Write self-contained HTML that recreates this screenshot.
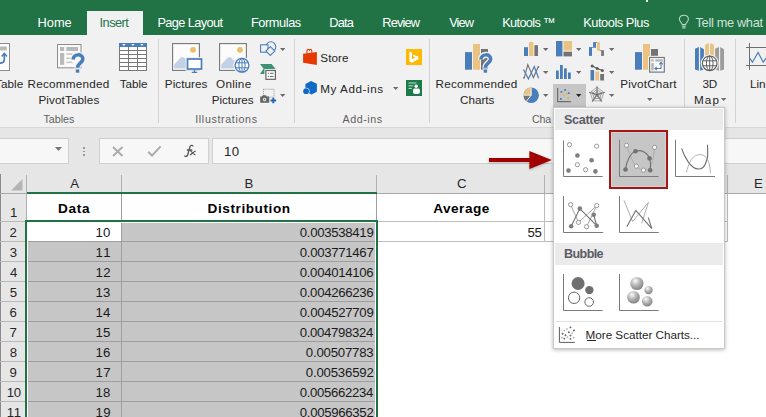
<!DOCTYPE html>
<html><head><meta charset="utf-8"><title>x</title>
<style>
html,body{margin:0;padding:0;background:#fff;}
#root{position:relative;width:766px;height:417px;overflow:hidden;background:#fff;font-family:"Liberation Sans",sans-serif;}
.t{position:absolute;white-space:pre;margin:0;padding:0;}
.r{position:absolute;}
svg{position:absolute;overflow:visible;}
</style></head><body><div id="root">
<div class="r" style="left:0px;top:0px;width:766px;height:35px;background:#217346;"></div>
<div class="r" style="left:87px;top:11px;width:56px;height:24px;background:#f1f1f1;"></div>
<div class="r" style="left:0px;top:35px;width:766px;height:92px;background:#f1f1f1;"></div>
<div class="r" style="left:0px;top:127px;width:766px;height:1px;background:#d6d6d6;"></div>
<div class="r" style="left:0px;top:128px;width:766px;height:46px;background:#e6e6e6;"></div>
<div class="t" style="left:37.38px;top:14px;font-size:12.8px;line-height:17px;letter-spacing:0.075px;color:#ffffff;">Home</div>
<div class="t" style="left:157.38px;top:14px;font-size:12.8px;line-height:17px;letter-spacing:-0.625px;color:#ffffff;">Page Layout</div>
<div class="t" style="left:250.98px;top:14px;font-size:12.8px;line-height:17px;letter-spacing:-0.443px;color:#ffffff;">Formulas</div>
<div class="t" style="left:329.18px;top:14px;font-size:12.8px;line-height:17px;letter-spacing:-0.783px;color:#ffffff;">Data</div>
<div class="t" style="left:382.28px;top:14px;font-size:12.8px;line-height:17px;letter-spacing:-0.832px;color:#ffffff;">Review</div>
<div class="t" style="left:449.20px;top:14px;font-size:12.8px;line-height:17px;letter-spacing:-0.940px;color:#ffffff;">View</div>
<div class="t" style="left:502.28px;top:14px;font-size:12.8px;line-height:17px;letter-spacing:-0.680px;color:#ffffff;">Kutools ™</div>
<div class="t" style="left:583.18px;top:14px;font-size:12.8px;line-height:17px;letter-spacing:-0.445px;color:#ffffff;">Kutools Plus</div>
<div class="t" style="left:99.55px;top:14px;font-size:12.8px;line-height:17px;letter-spacing:-0.530px;color:#217346;">Insert</div>
<div class="t" style="left:695.54px;top:14px;font-size:12.8px;line-height:17px;letter-spacing:-0.332px;color:#cfe2d6;">Tell me what</div>
<div class="t" style="left:-4.83px;top:76px;font-size:11.7px;line-height:15px;letter-spacing:0.010px;color:#262626;">Table</div>
<div class="t" style="left:27.46px;top:76px;font-size:11.7px;line-height:15px;letter-spacing:0.251px;color:#262626;">Recommended</div>
<div class="t" style="left:38.46px;top:92px;font-size:11.7px;line-height:15px;letter-spacing:0.100px;color:#262626;">PivotTables</div>
<div class="t" style="left:119.77px;top:76px;font-size:11.7px;line-height:15px;letter-spacing:-0.065px;color:#262626;">Table</div>
<div class="t" style="left:164.86px;top:76px;font-size:11.7px;line-height:15px;letter-spacing:0.030px;color:#262626;">Pictures</div>
<div class="t" style="left:216.07px;top:76px;font-size:11.7px;line-height:15px;letter-spacing:0.256px;color:#262626;">Online</div>
<div class="t" style="left:211.66px;top:92px;font-size:11.7px;line-height:15px;letter-spacing:-0.027px;color:#262626;">Pictures</div>
<div class="t" style="left:43.59px;top:112px;font-size:10.7px;line-height:14px;letter-spacing:-0.047px;color:#5f5f5f;">Tables</div>
<div class="t" style="left:195.24px;top:112px;font-size:10.7px;line-height:14px;letter-spacing:0.641px;color:#5f5f5f;">Illustrations</div>
<div class="t" style="left:342.60px;top:112px;font-size:10.7px;line-height:14px;letter-spacing:0.534px;color:#5f5f5f;">Add-ins</div>
<div class="t" style="left:532.07px;top:112px;font-size:10.7px;line-height:14px;letter-spacing:-0.177px;color:#5f5f5f;">Cha</div>
<div class="t" style="left:320.37px;top:50px;font-size:11.7px;line-height:15px;letter-spacing:0.033px;color:#262626;">Store</div>
<div class="t" style="left:320.26px;top:81px;font-size:11.7px;line-height:15px;letter-spacing:0.554px;color:#262626;">My Add-ins</div>
<div class="t" style="left:435.56px;top:76px;font-size:11.7px;line-height:15px;letter-spacing:0.251px;color:#262626;">Recommended</div>
<div class="t" style="left:460.02px;top:92px;font-size:11.7px;line-height:15px;letter-spacing:-0.012px;color:#262626;">Charts</div>
<div class="t" style="left:620.36px;top:76px;font-size:11.7px;line-height:15px;letter-spacing:0.173px;color:#262626;">PivotChart</div>
<div class="t" style="left:702.49px;top:76px;font-size:11.7px;line-height:15px;letter-spacing:-0.281px;color:#262626;">3D</div>
<div class="t" style="left:693.96px;top:92px;font-size:11.7px;line-height:15px;letter-spacing:1.174px;color:#262626;">Map</div>
<div class="t" style="left:749.96px;top:76px;font-size:11.7px;line-height:15px;letter-spacing:0.000px;color:#262626;">Line</div>
<div class="r" style="left:158px;top:39px;width:1px;height:84px;background:#d2d2d2;"></div>
<div class="r" style="left:294px;top:39px;width:1px;height:84px;background:#d2d2d2;"></div>
<div class="r" style="left:429px;top:39px;width:1px;height:84px;background:#d2d2d2;"></div>
<div class="r" style="left:684px;top:39px;width:1px;height:84px;background:#d2d2d2;"></div>
<div class="r" style="left:735px;top:39px;width:1px;height:84px;background:#d2d2d2;"></div>
<div class="r" style="left:-1px;top:138px;width:70px;height:26px;background:#f7f7f7;box-sizing:border-box;border:1px solid #cfcfcf;"></div>
<div class="r" style="left:99px;top:138px;width:110px;height:26px;background:#f7f7f7;box-sizing:border-box;border:1px solid #cfcfcf;"></div>
<div class="r" style="left:212px;top:138px;width:560px;height:26px;background:#f7f7f7;box-sizing:border-box;border:1px solid #cfcfcf;"></div>
<svg style="left:55px;top:147px" width="8" height="5"><path d="M0 0H7L3.5 4Z" fill="#777"/></svg>
<div class="r" style="left:83.3px;top:147px;width:1.4px;height:1.6px;background:#9a9a9a;"></div>
<div class="r" style="left:83.3px;top:150.5px;width:1.4px;height:1.6px;background:#9a9a9a;"></div>
<div class="r" style="left:83.3px;top:154px;width:1.4px;height:1.6px;background:#9a9a9a;"></div>
<svg style="left:112px;top:145px" width="12" height="12"><path d="M1 2L10.5 11M10.5 2L1 11" stroke="#ababab" stroke-width="1.9" fill="none"/></svg>
<svg style="left:147px;top:145px" width="14" height="12"><path d="M1.2 6.8L5 10.6L13.6 1.4" stroke="#ababab" stroke-width="2.1" fill="none"/></svg>
<svg style="left:0;top:0" width="766" height="417"><path d="M193 146.4C192.6 145 190.5 144.9 189.9 147L187.7 154.7C187.1 156.7 185.3 157 184.4 155.7M186.8 150H192.3" stroke="#555" stroke-width="1.3" fill="none"/><path d="M189.8 154.9C191.5 154.9 194 151 195.8 151M190.3 151C191.6 151 193.6 154.9 195.4 154.9" stroke="#555" stroke-width="1.15" fill="none"/></svg>
<div class="t" style="left:224.01px;top:143px;font-size:13.2px;line-height:17px;letter-spacing:0.300px;color:#262626;">10</div>
<div class="r" style="left:0px;top:174px;width:766px;height:20px;background:#e6e6e6;"></div>
<div class="r" style="left:0px;top:194px;width:26px;height:230px;background:#e6e6e6;"></div>
<div class="r" style="left:26px;top:194px;width:740px;height:230px;background:#ffffff;"></div>
<div class="r" style="left:0px;top:174px;width:1px;height:250px;background:#8a8a8a;"></div>
<div class="r" style="left:26px;top:194px;width:1px;height:27px;background:#b1b1b1;"></div>
<svg style="left:11px;top:179px" width="12" height="12"><path d="M11.5 0V11.5H0Z" fill="#b4b4b4"/></svg>
<div class="r" style="left:26px;top:175px;width:1px;height:19px;background:#b1b1b1;"></div>
<div class="r" style="left:121px;top:175px;width:1px;height:19px;background:#b1b1b1;"></div>
<div class="r" style="left:376px;top:175px;width:1px;height:19px;background:#b1b1b1;"></div>
<div class="r" style="left:544px;top:175px;width:1px;height:19px;background:#b1b1b1;"></div>
<div class="r" style="left:727px;top:175px;width:1px;height:19px;background:#b1b1b1;"></div>
<div class="r" style="left:0px;top:193px;width:766px;height:1px;background:#a9a9a9;"></div>
<div class="t" style="left:70.30px;top:175px;font-size:13.2px;line-height:17px;letter-spacing:0.000px;color:#262626;">A</div>
<div class="t" style="left:244.44px;top:175px;font-size:13.2px;line-height:17px;letter-spacing:0.000px;color:#262626;">B</div>
<div class="t" style="left:456.94px;top:175px;font-size:13.2px;line-height:17px;letter-spacing:0.000px;color:#262626;">C</div>
<div class="t" style="left:753.94px;top:175px;font-size:13.2px;line-height:17px;letter-spacing:0.000px;color:#262626;">E</div>
<div class="r" style="left:0px;top:221px;width:26px;height:1px;background:#b9b9b9;"></div>
<div class="r" style="left:0px;top:241px;width:26px;height:1px;background:#b9b9b9;"></div>
<div class="r" style="left:0px;top:261px;width:26px;height:1px;background:#b9b9b9;"></div>
<div class="r" style="left:0px;top:281px;width:26px;height:1px;background:#b9b9b9;"></div>
<div class="r" style="left:0px;top:301px;width:26px;height:1px;background:#b9b9b9;"></div>
<div class="r" style="left:0px;top:321px;width:26px;height:1px;background:#b9b9b9;"></div>
<div class="r" style="left:0px;top:341px;width:26px;height:1px;background:#b9b9b9;"></div>
<div class="r" style="left:0px;top:361px;width:26px;height:1px;background:#b9b9b9;"></div>
<div class="r" style="left:0px;top:381px;width:26px;height:1px;background:#b9b9b9;"></div>
<div class="r" style="left:0px;top:401px;width:26px;height:1px;background:#b9b9b9;"></div>
<div class="r" style="left:28px;top:242px;width:348px;height:180px;background:#c6c6c6;"></div>
<div class="r" style="left:122px;top:223px;width:254px;height:20px;background:#c6c6c6;"></div>
<div class="r" style="left:27px;top:221px;width:350px;height:1px;background:#9f9f9f;"></div>
<div class="r" style="left:27px;top:241px;width:350px;height:1px;background:#9f9f9f;"></div>
<div class="r" style="left:27px;top:261px;width:350px;height:1px;background:#9f9f9f;"></div>
<div class="r" style="left:27px;top:281px;width:350px;height:1px;background:#9f9f9f;"></div>
<div class="r" style="left:27px;top:301px;width:350px;height:1px;background:#9f9f9f;"></div>
<div class="r" style="left:27px;top:321px;width:350px;height:1px;background:#9f9f9f;"></div>
<div class="r" style="left:27px;top:341px;width:350px;height:1px;background:#9f9f9f;"></div>
<div class="r" style="left:27px;top:361px;width:350px;height:1px;background:#9f9f9f;"></div>
<div class="r" style="left:27px;top:381px;width:350px;height:1px;background:#9f9f9f;"></div>
<div class="r" style="left:27px;top:401px;width:350px;height:1px;background:#9f9f9f;"></div>
<div class="r" style="left:121px;top:194px;width:1px;height:230px;background:#9f9f9f;"></div>
<div class="r" style="left:377px;top:221px;width:350px;height:1px;background:#bdbdbd;"></div>
<div class="r" style="left:377px;top:241px;width:350px;height:1px;background:#bdbdbd;"></div>
<div class="r" style="left:544px;top:194px;width:1px;height:48px;background:#bdbdbd;"></div>
<div class="r" style="left:727px;top:194px;width:1px;height:48px;background:#bdbdbd;"></div>
<div class="r" style="left:376px;top:194px;width:1px;height:28px;background:#9f9f9f;"></div>
<div class="r" style="left:27px;top:192px;width:350px;height:2px;background:#217346;"></div>
<div class="r" style="left:25px;top:220px;width:353px;height:2px;background:#217346;"></div>
<div class="r" style="left:25px;top:220px;width:2px;height:200px;background:#217346;"></div>
<div class="r" style="left:376px;top:220px;width:2px;height:200px;background:#217346;"></div>
<div class="r" style="left:28px;top:222px;width:348px;height:1px;background:#fff;"></div>
<div class="r" style="left:27px;top:222px;width:1px;height:200px;background:#fff;"></div>
<div class="r" style="left:375px;top:222px;width:1px;height:200px;background:#fff;"></div>
<div class="t" style="left:57.92px;top:200px;font-size:13.6px;line-height:17px;letter-spacing:0.701px;color:#000;font-weight:700;">Data</div>
<div class="t" style="left:207.62px;top:200px;font-size:13.6px;line-height:17px;letter-spacing:0.564px;color:#000;font-weight:700;">Distribution</div>
<div class="t" style="left:433.16px;top:200px;font-size:13.6px;line-height:17px;letter-spacing:0.512px;color:#000;font-weight:700;">Average</div>
<div class="t" style="left:527.57px;top:224px;font-size:13.2px;line-height:17px;letter-spacing:-0.296px;color:#1a1a1a;">55</div>
<div class="t" style="left:10.01px;top:204px;font-size:13.2px;line-height:17px;letter-spacing:0.000px;color:#262626;">1</div>
<div class="t" style="left:9.54px;top:224px;font-size:13.2px;line-height:17px;letter-spacing:0.000px;color:#262626;">2</div>
<div class="t" style="left:95.41px;top:224px;font-size:13.2px;line-height:17px;letter-spacing:0.300px;color:#1a1a1a;">10</div>
<div class="t" style="left:299.74px;top:224px;font-size:13.2px;line-height:17px;letter-spacing:-0.303px;color:#1a1a1a;">0.003538419</div>
<div class="t" style="left:9.74px;top:244px;font-size:13.2px;line-height:17px;letter-spacing:0.000px;color:#262626;">3</div>
<div class="t" style="left:95.41px;top:244px;font-size:13.2px;line-height:17px;letter-spacing:1.422px;color:#1a1a1a;">11</div>
<div class="t" style="left:299.74px;top:244px;font-size:13.2px;line-height:17px;letter-spacing:-0.303px;color:#1a1a1a;">0.003771467</div>
<div class="t" style="left:9.94px;top:264px;font-size:13.2px;line-height:17px;letter-spacing:0.000px;color:#262626;">4</div>
<div class="t" style="left:95.41px;top:264px;font-size:13.2px;line-height:17px;letter-spacing:0.432px;color:#1a1a1a;">12</div>
<div class="t" style="left:299.74px;top:264px;font-size:13.2px;line-height:17px;letter-spacing:-0.310px;color:#1a1a1a;">0.004014106</div>
<div class="t" style="left:9.67px;top:284px;font-size:13.2px;line-height:17px;letter-spacing:0.000px;color:#262626;">5</div>
<div class="t" style="left:95.41px;top:284px;font-size:13.2px;line-height:17px;letter-spacing:0.366px;color:#1a1a1a;">13</div>
<div class="t" style="left:299.74px;top:284px;font-size:13.2px;line-height:17px;letter-spacing:-0.310px;color:#1a1a1a;">0.004266236</div>
<div class="t" style="left:9.54px;top:304px;font-size:13.2px;line-height:17px;letter-spacing:0.000px;color:#262626;">6</div>
<div class="t" style="left:95.41px;top:304px;font-size:13.2px;line-height:17px;letter-spacing:0.168px;color:#1a1a1a;">14</div>
<div class="t" style="left:299.74px;top:304px;font-size:13.2px;line-height:17px;letter-spacing:-0.303px;color:#1a1a1a;">0.004527709</div>
<div class="t" style="left:9.54px;top:324px;font-size:13.2px;line-height:17px;letter-spacing:0.000px;color:#262626;">7</div>
<div class="t" style="left:95.41px;top:324px;font-size:13.2px;line-height:17px;letter-spacing:0.366px;color:#1a1a1a;">15</div>
<div class="t" style="left:299.74px;top:324px;font-size:13.2px;line-height:17px;letter-spacing:-0.330px;color:#1a1a1a;">0.004798324</div>
<div class="t" style="left:9.67px;top:344px;font-size:13.2px;line-height:17px;letter-spacing:0.000px;color:#262626;">8</div>
<div class="t" style="left:95.41px;top:344px;font-size:13.2px;line-height:17px;letter-spacing:0.366px;color:#1a1a1a;">16</div>
<div class="t" style="left:305.77px;top:344px;font-size:13.2px;line-height:17px;letter-spacing:-0.194px;color:#1a1a1a;">0.00507783</div>
<div class="t" style="left:9.61px;top:364px;font-size:13.2px;line-height:17px;letter-spacing:0.000px;color:#262626;">9</div>
<div class="t" style="left:95.41px;top:364px;font-size:13.2px;line-height:17px;letter-spacing:0.432px;color:#1a1a1a;">17</div>
<div class="t" style="left:305.77px;top:364px;font-size:13.2px;line-height:17px;letter-spacing:-0.186px;color:#1a1a1a;">0.00536592</div>
<div class="t" style="left:6.81px;top:384px;font-size:13.2px;line-height:17px;letter-spacing:-0.400px;color:#262626;">10</div>
<div class="t" style="left:95.41px;top:384px;font-size:13.2px;line-height:17px;letter-spacing:0.366px;color:#1a1a1a;">18</div>
<div class="t" style="left:299.74px;top:384px;font-size:13.2px;line-height:17px;letter-spacing:-0.330px;color:#1a1a1a;">0.005662234</div>
<div class="t" style="left:6.81px;top:404px;font-size:13.2px;line-height:17px;letter-spacing:0.722px;color:#262626;">11</div>
<div class="t" style="left:95.41px;top:404px;font-size:13.2px;line-height:17px;letter-spacing:0.432px;color:#1a1a1a;">19</div>
<div class="t" style="left:299.74px;top:404px;font-size:13.2px;line-height:17px;letter-spacing:-0.303px;color:#1a1a1a;">0.005966352</div>
<svg style="left:-18px;top:43px" width="28" height="28"><rect x="0.5" y="0.5" width="27" height="27" fill="#fdfdfd" stroke="#8c8c8c"/>
<rect x="3" y="3.5" width="21.8" height="3.9" fill="#b9b9b9"/>
<path d="M22.3 10.6V16.5C22.3 20.4 17.5 21 15.5 18.6" stroke="#4a7ebb" stroke-width="1.7" fill="none"/>
<path d="M19.6 13.6L22.3 10.4L25 13.6" stroke="#4a7ebb" stroke-width="1.5" fill="none"/></svg>
<svg style="left:57px;top:44px" width="30" height="31"><rect x="0.5" y="0.5" width="23.5" height="23.3" fill="#fafafa" stroke="#8c8c8c"/>
<rect x="3" y="3" width="4.2" height="4" fill="#b9b9b9"/><rect x="9.3" y="3" width="11.7" height="4" fill="#b9b9b9"/>
<rect x="3" y="9" width="4.2" height="11.8" fill="#b9b9b9"/>
<rect x="9.3" y="9.3" width="6" height="1.5" fill="#c4c4c4"/><rect x="9.3" y="13.6" width="6" height="1.5" fill="#c4c4c4"/><rect x="9.3" y="17.6" width="6" height="1.5" fill="#c4c4c4"/><g transform="translate(14.2,9)"><path d="M2 6.6C2 0.4 11.7 0.4 11.7 6C11.7 9.8 6.4 10 6.4 14.8" stroke="#f1f1f1" stroke-width="6.2" fill="none"/><rect x="3.6" y="15.4" width="5.6" height="5.4" fill="#f1f1f1"/>
<path d="M2 6.6C2 0.4 11.7 0.4 11.7 6C11.7 9.8 6.4 10 6.4 14.8" stroke="#4a7ebb" stroke-width="3.5" fill="none"/><rect x="4.6" y="16.4" width="3.5" height="3.3" fill="#4a7ebb"/></g></svg>
<svg style="left:119px;top:43px" width="28" height="28"><rect x="0.5" y="0.5" width="27" height="27" fill="#fdfdfd" stroke="#787878" stroke-width="1"/>
<rect x="0" y="0" width="28" height="4" fill="#4a7ebb"/><path d="M0.5 7.5H27.5" stroke="#787878" stroke-width="1"/><path d="M0.5 11.5H27.5" stroke="#787878" stroke-width="1"/><path d="M0.5 15.5H27.5" stroke="#787878" stroke-width="1"/><path d="M0.5 19.5H27.5" stroke="#787878" stroke-width="1"/><path d="M0.5 23.5H27.5" stroke="#787878" stroke-width="1"/>
<path d="M9.5 4V27.5M18.5 4V27.5" stroke="#787878" stroke-width="1"/>
<path d="M3.2 1.1h3.4l-1.7 2zM12.2 1.1h3.4l-1.7 2zM21.2 1.1h3.4l-1.7 2z" fill="#fff"/></svg>
<svg style="left:171.5px;top:43px" width="32" height="31"><rect x="0.6" y="0.6" width="26.8" height="26.8" fill="#fcfcfc" stroke="#777" stroke-width="1.1"/>
<circle cx="21" cy="6.8" r="2.9" fill="#edbe6a"/>
<path d="M2.2 25.6V21.5L9 14.2H11.6L17 19.5V25.6Z" fill="#c3d1e6"/><rect x="13.6" y="14.2" width="17.5" height="13.6" fill="#f1f1f1"/>
<rect x="15.5" y="16" width="14" height="10" fill="#fff" stroke="#4a7ebb" stroke-width="1.7"/>
<path d="M22.5 27V28.8M19.8 29.3H25.2" stroke="#4a7ebb" stroke-width="1.2"/></svg>
<svg style="left:218.6px;top:43px" width="32" height="31"><rect x="0.6" y="0.6" width="26.8" height="26.8" fill="#fcfcfc" stroke="#777" stroke-width="1.1"/>
<circle cx="21" cy="6.8" r="2.9" fill="#edbe6a"/>
<path d="M2.2 25.6V21.5L9 14.2H11.6L17 19.5V25.6Z" fill="#c3d1e6"/><circle cx="23" cy="22.3" r="8.8" fill="#f1f1f1"/><circle cx="23" cy="22.3" r="6.9" fill="#fff" stroke="#4a7ebb" stroke-width="1.3"/>
<ellipse cx="23" cy="22.3" rx="3.1" ry="6.9" fill="none" stroke="#4a7ebb" stroke-width="1"/>
<path d="M23 15.4V29.2M16.6 19.8H29.4M16.6 24.8H29.4" stroke="#4a7ebb" stroke-width="1"/></svg>
<svg style="left:0px;top:0px" width="766" height="120"><circle cx="270.8" cy="46.8" r="5" fill="none" stroke="#4a7ebb" stroke-width="1.1"/>
<rect x="260.6" y="44.8" width="7.4" height="7.4" fill="#f1f1f1" stroke="#4a7ebb" stroke-width="1.1"/>
<path d="M270.3 46.7L274.8 51.1L270.3 55.4L265.9 51.1Z" fill="#f1f1f1" stroke="#4a7ebb" stroke-width="1.1"/>
<path d="M260 64H271.6L275.2 68.6V74H260L263.6 68.8Z" fill="#3a9473"/>
<rect x="264.4" y="69" width="12.4" height="11.8" fill="#f1f1f1"/>
<rect x="265.9" y="70.5" width="9.5" height="8.8" fill="#fdfdfd" stroke="#636363" stroke-width="1.2"/>
<path d="M267.8 73.3h1.3M267.8 76.4h1.3M270 73.3H273.6M270 76.4H273.6" stroke="#636363" stroke-width="1"/>
<rect x="263.5" y="89.2" width="10.5" height="8" fill="none" stroke="#8c8c8c" stroke-width="0.9" stroke-dasharray="1 1"/>
<path d="M260.2 96.4H262L262.8 95.2H266L266.8 96.4H269.2V102.7H260.2Z" fill="#666"/><circle cx="264.6" cy="99.5" r="1.7" fill="#f1f1f1"/><circle cx="264.6" cy="99.5" r="0.8" fill="#666"/>
<path d="M273.3 97.7V103.3M270.5 100.5H276.1" stroke="#2a64ad" stroke-width="1.9"/></svg>
<svg style="left:279.7px;top:48.0px" width="5.4" height="3"><path d="M0 0H5.4L2.7 2.9Z" fill="#6a6a6a"/></svg>
<svg style="left:279.7px;top:94.10000000000001px" width="5.4" height="3"><path d="M0 0H5.4L2.7 2.9Z" fill="#6a6a6a"/></svg>
<svg style="left:0px;top:0px" width="766" height="120"><path d="M306.9 53.4V51.2C306.9 48.9 309.3 48.9 309.4 50.6C309.5 48.9 311.8 48.9 311.8 51.2V52.8" stroke="#e43a00" stroke-width="1.1" fill="none"/>
<path d="M303.1 53.8L316.9 52.1V64.9L303.1 62.7Z" fill="#e43a00"/>
<path d="M305.4 84.1L311 81L316.9 83.7V91.8L311.5 94.6L305.4 91.5Z" fill="#1169c4"/>
<circle cx="306.1" cy="91.2" r="3.5" fill="#f1f1f1"/><circle cx="306.1" cy="91.2" r="2.9" fill="#1169c4"/></svg>
<svg style="left:392.7px;top:87.10000000000001px" width="5.4" height="3"><path d="M0 0H5.4L2.7 2.9Z" fill="#6a6a6a"/></svg>
<svg style="left:0px;top:0px" width="766" height="120"><rect x="406" y="49" width="16" height="16" fill="#ffb900"/>
<path d="M409.4 51.6L411.9 52.5V59.2L415.4 57.6L413.3 56.6L412.5 54.5L418.3 56.5V59.1L411.9 62.8L409.4 61.4Z" fill="#fff"/>
<rect x="406" y="80" width="16" height="16" fill="#1d7a4b"/>
<path d="M408.5 83H416.5M408.5 85.8H413.3M408.5 88.4H412" stroke="#bfe0cd" stroke-width="1"/>
<circle cx="416.2" cy="86.3" r="1.7" fill="#fff"/>
<path d="M413 93.2V90.6C413 89 414 88.6 415 88.6H417.6C418.8 88.6 419.9 89 419.9 90.6V93.2H418.6V94H414.3V93.2Z" fill="#fff"/></svg>
<svg style="left:465px;top:44px" width="29" height="30"><rect x="0" y="8.1" width="7" height="17.6" fill="#4a7ebb"/><rect x="8" y="0" width="7" height="25.7" fill="#eac282"/><rect x="16" y="5" width="7" height="20.7" fill="#737373"/><g transform="translate(14,9)"><path d="M2 6.6C2 0.4 11.7 0.4 11.7 6C11.7 9.8 6.4 10 6.4 14.8" stroke="#f1f1f1" stroke-width="6.2" fill="none"/><rect x="3.6" y="15.4" width="5.6" height="5.4" fill="#f1f1f1"/>
<path d="M2 6.6C2 0.4 11.7 0.4 11.7 6C11.7 9.8 6.4 10 6.4 14.8" stroke="#4a7ebb" stroke-width="3.5" fill="none"/><rect x="4.6" y="16.4" width="3.5" height="3.3" fill="#4a7ebb"/></g></svg>
<svg style="left:524px;top:41.8px" width="14" height="14"><rect x="0" y="5.2" width="4" height="8.8" fill="#4a7ebb"/><rect x="5" y="0" width="4.4" height="14" fill="#eac282"/><rect x="10.4" y="3.2" width="3.6" height="10.8" fill="#737373"/></svg>
<svg style="left:543.0px;top:47.7px" width="5.4" height="3"><path d="M0 0H5.4L2.7 2.9Z" fill="#6a6a6a"/></svg>
<svg style="left:556px;top:41.4px" width="16" height="15.4"><rect x="0" y="0" width="6.4" height="15.4" fill="#4a7ebb"/><rect x="7.5" y="0" width="8.5" height="9.6" fill="#eac282"/><rect x="7.5" y="10.7" width="8.5" height="4.7" fill="#737373"/></svg>
<svg style="left:575.9px;top:47.7px" width="5.4" height="3"><path d="M0 0H5.4L2.7 2.9Z" fill="#6a6a6a"/></svg>
<svg style="left:589px;top:42px" width="15" height="14"><rect x="0" y="5.1" width="3" height="8.8" fill="#4a7ebb"/><rect x="4.1" y="0.1" width="2.9" height="5.7" fill="#4a7ebb"/>
<rect x="8" y="0.1" width="2.9" height="8.7" fill="#eac282"/><rect x="12.2" y="8.2" width="2.7" height="5.7" fill="#737373"/>
<path d="M3 5.5H4.1M7 0.4H8M10.9 8.5H12.2" stroke="#666" stroke-width="0.7"/></svg>
<svg style="left:608.9px;top:47.7px" width="5.4" height="3"><path d="M0 0H5.4L2.7 2.9Z" fill="#6a6a6a"/></svg>
<svg style="left:0px;top:0px" width="766" height="120"><path d="M524.3 77.6L527.8 64.6L533.4 77.6L538.2 67.1" stroke="#6e6e6e" stroke-width="1.1" fill="none"/>
<path d="M523.5 69.5L528.4 78.9L534.3 66.5L538.6 78.2" stroke="#4a7ebb" stroke-width="1.2" fill="none"/>
<rect x="523.2" y="77" width="1.6" height="1.6" fill="#6e6e6e"/><rect x="537.6" y="66.2" width="1.6" height="1.6" fill="#6e6e6e"/></svg>
<svg style="left:543.0px;top:70.7px" width="5.4" height="3"><path d="M0 0H5.4L2.7 2.9Z" fill="#6a6a6a"/></svg>
<svg style="left:556px;top:64.8px" width="15" height="14"><rect x="0" y="5.5" width="2.8" height="8.5" fill="#4a7ebb"/><rect x="4" y="0" width="2.8" height="14" fill="#4a7ebb"/><rect x="8" y="3.4" width="2.8" height="10.6" fill="#4a7ebb"/><rect x="12" y="7.5" width="2.8" height="6.5" fill="#4a7ebb"/></svg>
<svg style="left:575.9px;top:70.7px" width="5.4" height="3"><path d="M0 0H5.4L2.7 2.9Z" fill="#6a6a6a"/></svg>
<svg style="left:589.5px;top:63.5px" width="15" height="17"><rect x="0.5" y="6" width="3.6" height="10.5" fill="#4a7ebb"/><rect x="5.3" y="7.5" width="3.8" height="9" fill="#eac282"/><rect x="10.2" y="10" width="3.8" height="6.5" fill="#737373"/>
<path d="M2.2 2L7.2 4.6L12.3 6.6" stroke="#595959" stroke-width="1.1" fill="none"/><circle cx="2.2" cy="2" r="1.5" fill="#595959"/><circle cx="7.2" cy="4.6" r="1.5" fill="#595959"/><circle cx="12.3" cy="6.6" r="1.5" fill="#595959"/></svg>
<svg style="left:608.9px;top:70.7px" width="5.4" height="3"><path d="M0 0H5.4L2.7 2.9Z" fill="#6a6a6a"/></svg>
<svg style="left:522.5px;top:86.5px" width="16.5" height="16.5"><circle cx="8.2" cy="8.2" r="7.7" fill="#4a7ebb"/>
<path d="M8.2 8.2V0.5A7.7 7.7 0 0 0 0.5 8.2Z" fill="#eac282"/><path d="M8.2 8.2H0.5A7.7 7.7 0 0 0 3.4 14.2Z" fill="#737373"/>
<path d="M8.2 0.3V8.2H0.3M8.2 8.2L3.2 14.5" stroke="#f1f1f1" stroke-width="1" fill="none"/></svg>
<svg style="left:543.0px;top:94.2px" width="5.4" height="3"><path d="M0 0H5.4L2.7 2.9Z" fill="#6a6a6a"/></svg>
<div class="r" style="left:553px;top:84px;width:33px;height:24px;background:#c6c6c6;"></div>
<svg style="left:557px;top:88px" width="15" height="15"><path d="M0.6 0V13.6H14" stroke="#6e6e6e" stroke-width="1.2" fill="none"/>
<rect x="3.5" y="3" width="1.8" height="1.8" fill="#4a7ebb"/><rect x="7.2" y="1" width="1.8" height="1.8" fill="#4a7ebb"/><rect x="10.8" y="4.2" width="1.8" height="1.8" fill="#4a7ebb"/><rect x="3" y="10" width="1.8" height="1.8" fill="#4a7ebb"/>
<rect x="5.5" y="6.3" width="1.8" height="1.8" fill="#e8b04e"/><rect x="8.6" y="5" width="1.8" height="1.8" fill="#e8b04e"/><rect x="10.2" y="9" width="1.8" height="1.8" fill="#e8b04e"/></svg>
<svg style="left:575.5px;top:94.2px" width="5.4" height="3"><path d="M0 0H5.4L2.7 2.9Z" fill="#222"/></svg>
<svg style="left:589px;top:86.3px" width="16" height="16"><path d="M8 0.3V8.6M15.8 6.2L8 8.6M12.8 15.6L8 8.6M3.2 15.6L8 8.6M0.2 6.2L8 8.6" stroke="#6f6f6f" stroke-width="1.1"/>
<path d="M8 3.2Q10.4 6.2 13 7Q11 9.6 11 12.8Q8 11.8 5 12.8Q5 9.6 3 7Q5.6 6.2 8 3.2Z" stroke="#808080" stroke-width="0.8" fill="none"/>
<path d="M8 5.6Q9.2 7.2 10.6 7.8Q9.6 9.2 9.6 10.8Q8 10.4 6.4 10.8Q6.4 9.2 5.4 7.8Q6.8 7.2 8 5.6Z" stroke="#808080" stroke-width="0.7" fill="none"/>
<path d="M8 1.2L14.8 6.4L12.2 14.8H3.8L1.2 6.4Z" stroke="#8a8a8a" stroke-width="0.7" fill="none"/></svg>
<svg style="left:608.9px;top:94.2px" width="5.4" height="3"><path d="M0 0H5.4L2.7 2.9Z" fill="#6a6a6a"/></svg>
<svg style="left:635px;top:44px" width="31" height="29"><rect x="0" y="8.1" width="7" height="17.6" fill="#4a7ebb"/><rect x="8" y="0" width="7" height="25.7" fill="#eac282"/><rect x="16" y="5" width="7" height="6.8" fill="#737373"/>
<rect x="13" y="12" width="17.8" height="17.6" fill="#f1f1f1"/>
<rect x="14.6" y="13.5" width="14.7" height="14.6" fill="#fcfcfc" stroke="#777" stroke-width="1.2"/>
<rect x="16.3" y="15.2" width="2.5" height="2.4" fill="#b5b5b5"/><rect x="20.3" y="15.2" width="7.5" height="2.4" fill="#b5b5b5"/><rect x="16.3" y="19" width="2.5" height="7.5" fill="#b5b5b5"/>
<path d="M20 24.5H26V18.6M24.3 20.4L26 18.4L27.7 20.4M21.8 22.8L19.9 24.5L21.8 26.2" stroke="#4a7ebb" stroke-width="1.1" fill="none"/></svg>
<svg style="left:646.8px;top:97.7px" width="5.4" height="3"><path d="M0 0H5.4L2.7 2.9Z" fill="#6a6a6a"/></svg>
<svg style="left:0px;top:0px" width="766" height="120"><path d="M695 48.8L698.9 47V70.8L695 69.4Z" fill="#4a7ebb"/><path d="M700.2 47L703.9 49.2V69.4L700.2 70.8Z" fill="#4a7ebb"/>
<path d="M705.1 44.7L708.9 42.9V60H705.1Z" fill="#eac282"/><path d="M710.1 42.9L713.9 44.7V60H710.1Z" fill="#eac282"/>
<path d="M715.1 48.8L719 47V70.8L715.1 69.4Z" fill="#9c9c9c"/><path d="M720.2 47L724 49.2V69.4L720.2 70.8Z" fill="#9c9c9c"/>
<circle cx="709.7" cy="63.3" r="9" fill="#f1f1f1"/><circle cx="709.7" cy="63.3" r="7.3" fill="#fff" stroke="#5f5f5f" stroke-width="1.2"/>
<ellipse cx="709.7" cy="63.3" rx="3.3" ry="7.3" fill="none" stroke="#5f5f5f" stroke-width="1"/>
<path d="M709.7 56V70.6M702.8 60.8H716.6M702.8 65.8H716.6" stroke="#5f5f5f" stroke-width="1"/></svg>
<svg style="left:720.6999999999999px;top:98.2px" width="5.4" height="3"><path d="M0 0H5.4L2.7 2.9Z" fill="#6a6a6a"/></svg>
<svg style="left:0px;top:0px" width="766" height="120"><path d="M749.5 42.9V69.8M746 47.5H766M746 65.5H766" stroke="#6e6e6e" stroke-width="1" fill="none"/>
<path d="M749.9 58.4L752.4 62.2L758.1 52.5L763.2 62.2L766.5 57.5" stroke="#4a7ebb" stroke-width="1.2" fill="none"/></svg>
<svg style="left:678px;top:14px" width="12" height="16"><path d="M4.2 10.6C4.2 8.6 1.4 7.8 1.4 5.3C1.4 2.6 3.4 1.2 5.9 1.2C8.4 1.2 10.4 2.6 10.4 5.3C10.4 7.8 7.6 8.6 7.6 10.6Z" stroke="#b7d6c3" stroke-width="1.1" fill="none"/>
<path d="M3.9 12.2H7.9M4.3 13.9H7.5" stroke="#b7d6c3" stroke-width="1.1"/></svg>
<div class="r" style="left:646px;top:0px;width:1.5px;height:2px;background:#e8f1ec;"></div>
<div class="r" style="left:553px;top:107px;width:172px;height:242px;background:#ffffff;box-sizing:border-box;border:1px solid #c8c8c8;box-shadow:0 1px 4px rgba(0,0,0,0.28);"></div>
<div class="r" style="left:555px;top:109px;width:168px;height:21px;background:#ebebeb;"></div>
<div class="r" style="left:555px;top:243px;width:168px;height:22px;background:#ebebeb;"></div>
<div class="r" style="left:556px;top:321px;width:166px;height:1px;background:#e1e1e1;"></div>
<div class="t" style="left:563.98px;top:112px;font-size:12.6px;line-height:16px;letter-spacing:-0.318px;color:#5c5c66;font-weight:700;">Scatter</div>
<div class="t" style="left:564.08px;top:246px;font-size:12.6px;line-height:16px;letter-spacing:-0.643px;color:#5c5c66;font-weight:700;">Bubble</div>
<div class="t" style="left:585.56px;top:327px;font-size:11.7px;line-height:15px;letter-spacing:-0.014px;color:#262626;">More Scatter Charts...</div>
<div class="r" style="left:586.5px;top:340.4px;width:9.6px;height:1px;background:#262626;"></div>
<div class="r" style="left:609px;top:130px;width:59px;height:59px;background:#c6c6c6;box-sizing:border-box;border:2px solid #a51616;box-shadow:inset 0 0 0 1px #d2d2d2;"></div>
<svg style="left:0;top:0" width="766" height="417"><path d="M563.5 140.5V176.5H602.7" stroke="#7a7a7a" stroke-width="1" fill="none"/><circle cx="569.5" cy="144.7" r="2.1" fill="#fff" stroke="#8c8c8c" stroke-width="0.9"/><circle cx="596.6" cy="146.2" r="2.1" fill="#fff" stroke="#8c8c8c" stroke-width="0.9"/><circle cx="577.4" cy="164.7" r="2.1" fill="#fff" stroke="#8c8c8c" stroke-width="0.9"/><circle cx="585.6" cy="169.7" r="2.1" fill="#fff" stroke="#8c8c8c" stroke-width="0.9"/><circle cx="577.4" cy="155.5" r="2.3000000000000003" fill="#7f7f7f"/><circle cx="591.6" cy="160.3" r="2.3000000000000003" fill="#7f7f7f"/><circle cx="568.5" cy="170.6" r="2.3000000000000003" fill="#7f7f7f"/><circle cx="595.4" cy="171.4" r="2.3000000000000003" fill="#7f7f7f"/><path d="M619.5 139.8V176.5H658.5" stroke="#7a7a7a" stroke-width="1" fill="none"/><path d="M626.5 145.3C629 152 632 162 636.4 166.2C640 169.5 641 170 643.5 170.2C652 171 653 160 654.6 147.4" stroke="#a9a9a9" stroke-width="0.9" fill="none"/><path d="M625.5 169.5C626.5 160 631 153 635.5 151.3C641 149.3 647 152 649.5 158.4C651 162 650.6 166 650.2 170.2" stroke="#707070" stroke-width="1.1" fill="none"/><circle cx="626.5" cy="145.3" r="2.1" fill="#fff" stroke="#8c8c8c" stroke-width="0.9"/><circle cx="654.6" cy="147.4" r="2.1" fill="#fff" stroke="#8c8c8c" stroke-width="0.9"/><circle cx="636.4" cy="166.2" r="2.1" fill="#fff" stroke="#8c8c8c" stroke-width="0.9"/><circle cx="643.5" cy="170.2" r="2.1" fill="#fff" stroke="#8c8c8c" stroke-width="0.9"/><circle cx="635.5" cy="151.3" r="2.3000000000000003" fill="#727272"/><circle cx="649.5" cy="158.4" r="2.3000000000000003" fill="#727272"/><circle cx="625.5" cy="169.5" r="2.3000000000000003" fill="#727272"/><circle cx="650.2" cy="170.2" r="2.3000000000000003" fill="#727272"/><path d="M675.5 139.8V176.5H715" stroke="#7a7a7a" stroke-width="1" fill="none"/><path d="M681.6 148.4C683.5 154 685.6 158.2 688 161.6C691 166 694.5 169 698.8 169C701.5 169 703.8 167.5 705.3 164C706.8 160.5 707.5 158 707.7 155.6C707.8 152 707.6 148 707.5 144.8" stroke="#6a6a6a" stroke-width="1.1" fill="none"/><path d="M686.5 172.3C687.5 168 688.6 164.6 690.4 161C692.8 156.6 696 154.6 700 154.6C703 154.6 705.6 156 707.1 158.6C709.2 162.4 710.2 167 710.4 173.3" stroke="#a8a8a8" stroke-width="0.9" fill="none"/><path d="M563.5 196V232.5H603.2" stroke="#7a7a7a" stroke-width="1" fill="none"/><path d="M570.6 204.6L578.5 222.4L596.7 205.6L586.6 226.7" stroke="#9a9a9a" stroke-width="0.9" fill="none"/><path d="M571.2 226.3L579.8 208.6L596.7 225.7L593.7 214.8" stroke="#707070" stroke-width="1.1" fill="none"/><circle cx="570.6" cy="204.6" r="2.1" fill="#fff" stroke="#8c8c8c" stroke-width="0.9"/><circle cx="596.7" cy="205.6" r="2.1" fill="#fff" stroke="#8c8c8c" stroke-width="0.9"/><circle cx="578.5" cy="222.4" r="2.1" fill="#fff" stroke="#8c8c8c" stroke-width="0.9"/><circle cx="586.6" cy="226.7" r="2.1" fill="#fff" stroke="#8c8c8c" stroke-width="0.9"/><circle cx="579.8" cy="208.6" r="2.3000000000000003" fill="#7f7f7f"/><circle cx="593.7" cy="214.8" r="2.3000000000000003" fill="#7f7f7f"/><circle cx="571.2" cy="226.3" r="2.3000000000000003" fill="#7f7f7f"/><circle cx="596.7" cy="225.7" r="2.3000000000000003" fill="#7f7f7f"/><path d="M619.5 196V232.5H658.8" stroke="#7a7a7a" stroke-width="1" fill="none"/><path d="M624 200.4L632.6 221.5L648.5 202.3L641.6 223.4" stroke="#a5a5a5" stroke-width="0.9" fill="none"/><path d="M626.8 226.8L635.8 210.5L651.8 228.6L648.3 217.6" stroke="#707070" stroke-width="1.1" fill="none"/><path d="M563.5 274V310.5H602.6" stroke="#7a7a7a" stroke-width="1" fill="none"/><circle cx="578.1" cy="283.5" r="6.5" fill="#6f6f6f"/><circle cx="589.4" cy="290.1" r="4.2" fill="#6f6f6f"/><circle cx="574.1" cy="297.8" r="5.7" fill="#fff" stroke="#666" stroke-width="1"/><circle cx="589.2" cy="302" r="4.3" fill="#fff" stroke="#666" stroke-width="1"/><path d="M619.5 274V310.5H658.6" stroke="#7a7a7a" stroke-width="1" fill="none"/><defs><radialGradient id="sg" cx="0.38" cy="0.3" r="0.75"><stop offset="0" stop-color="#fbfbfb"/><stop offset="0.5" stop-color="#b2b2b2"/><stop offset="1" stop-color="#7e7e7e"/></radialGradient></defs><circle cx="636.9" cy="283.5" r="6.6" fill="url(#sg)"/><circle cx="648.5" cy="290.1" r="4.2" fill="url(#sg)"/><circle cx="633.5" cy="297.2" r="6.3" fill="url(#sg)"/><circle cx="647.2" cy="301.2" r="5.3" fill="url(#sg)"/><path d="M559.4 327V342.4H574.8" stroke="#5f5f5f" stroke-width="1" fill="none"/><path d="M570.5 326.2L571.7 327.4L570.5 328.59999999999997L569.3 327.4Z" fill="#6a6a6a"/><path d="M568.8 331.1L570.0 332.3L568.8 333.5L567.5999999999999 332.3Z" fill="#6a6a6a"/><path d="M574 329.3L575.2 330.5L574 331.7L572.8 330.5Z" fill="#6a6a6a"/><path d="M562.6 332.6L563.8000000000001 333.8L562.6 335.0L561.4 333.8Z" fill="#6a6a6a"/><path d="M565.5 334.1L566.7 335.3L565.5 336.5L564.3 335.3Z" fill="#6a6a6a"/><path d="M570.5 334.40000000000003L571.7 335.6L570.5 336.8L569.3 335.6Z" fill="#6a6a6a"/><path d="M564.3 337.40000000000003L565.5 338.6L564.3 339.8L563.0999999999999 338.6Z" fill="#6a6a6a"/><path d="M570.5 337.7L571.7 338.9L570.5 340.09999999999997L569.3 338.9Z" fill="#6a6a6a"/><path d="M564.3 329.4L565.4 330.5L564.3 331.6L563.1999999999999 330.5Z" fill="#b0b0b0"/><path d="M572 332.09999999999997L573.1 333.2L572 334.3L570.9 333.2Z" fill="#b0b0b0"/><path d="M561.9 336.5L563.0 337.6L561.9 338.70000000000005L560.8 337.6Z" fill="#b0b0b0"/><path d="M573.6 336.5L574.7 337.6L573.6 338.70000000000005L572.5 337.6Z" fill="#b0b0b0"/><path d="M567.6 336.09999999999997L568.7 337.2L567.6 338.3L566.5 337.2Z" fill="#b0b0b0"/><path d="M567 327.9L568.1 329L567 330.1L565.9 329Z" fill="#b0b0b0"/></svg>
<svg style="left:0;top:0;filter:drop-shadow(0px 1px 1px rgba(0,0,0,0.25))" width="766" height="417"><path d="M489 158.1H529.4V151L551.8 160L529.4 169V161.9H489Z" fill="#a00000"/></svg>
</div></body></html>
